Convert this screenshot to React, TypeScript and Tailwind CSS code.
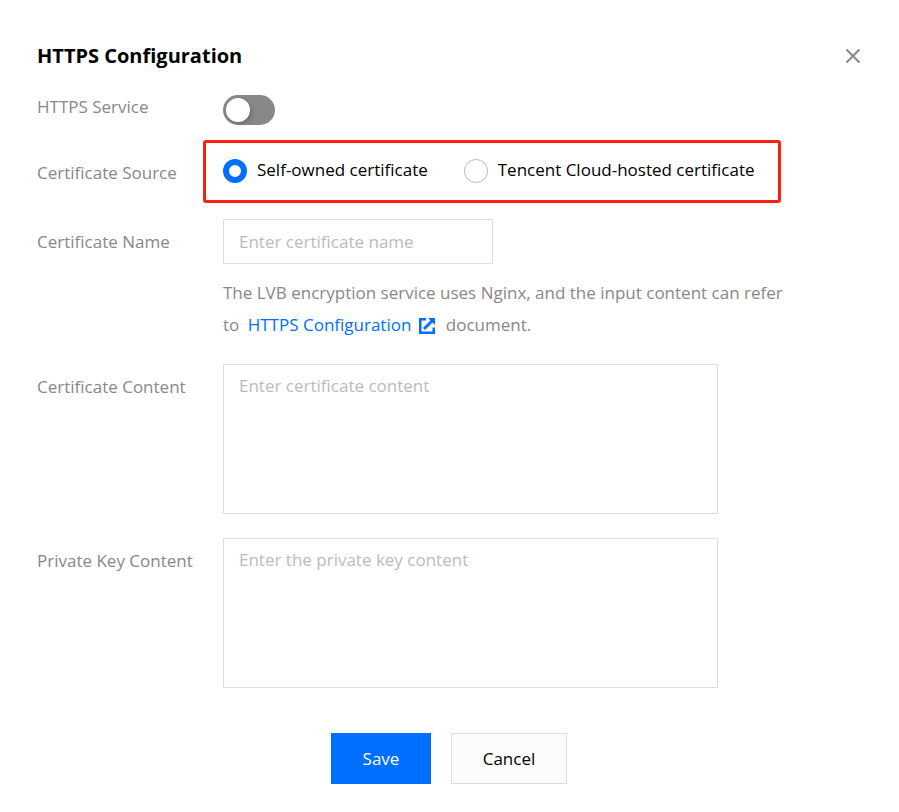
import { useState, type ReactNode } from "react";

const labelClass = "w-[186px] shrink-0 leading-6 text-[#888888]";
const fieldClass =
  "block border border-[#dddddd] bg-white px-[15px] text-black outline-none placeholder:text-[#bbbbbb] placeholder:opacity-100 focus:border-[#006eff]";

function CertificateOption({
  value,
  selected,
  onSelect,
  children,
}: {
  value: string;
  selected: string;
  onSelect: (value: string) => void;
  children: ReactNode;
}) {
  return (
    <label className="flex cursor-pointer items-center gap-[10px] whitespace-nowrap">
      <input
        type="radio"
        name="certificate-source"
        value={value}
        checked={selected === value}
        onChange={() => onSelect(value)}
        className="mt-[2px] size-6 shrink-0 appearance-none rounded-full border border-[#bbbbbb] bg-white checked:border-[6px] checked:border-[#006eff]"
      />
      <span className="leading-6">{children}</span>
    </label>
  );
}

function ExternalLinkIcon() {
  return (
    <svg viewBox="0 0 16 16" className="ml-2 inline size-4 align-[-3px]" fill="none" aria-hidden="true">
      <path d="M7 1.25H1.25v13.5h13.5V9.5" stroke="currentColor" strokeWidth="2.5" />
      <path d="M5 11 13 3" stroke="currentColor" strokeWidth="2.8" />
      <path d="M9 0h7v7z" fill="currentColor" />
    </svg>
  );
}

export default function App() {
  const [enabled, setEnabled] = useState(false);
  const [source, setSource] = useState("self");

  return (
    <main className="min-h-screen bg-white pt-10 pr-[38px] pb-7 pl-[37px] font-['Open_Sans','Noto_Sans',sans-serif] text-[17px] text-black">
      <header className="flex h-8 items-center justify-between">
        <h1 className="text-[20px] font-bold">HTTPS Configuration</h1>
        <button type="button" aria-label="Close" className="flex size-4 items-center justify-center text-[#888888]">
          <svg viewBox="0 0 16 16" className="size-4" fill="none" aria-hidden="true">
            <path d="M1.5 1.5l13 13M14.5 1.5l-13 13" stroke="currentColor" strokeWidth="2" />
          </svg>
        </button>
      </header>

      <form onSubmit={(event) => event.preventDefault()}>
        <div className="mt-[23px] flex">
          <label htmlFor="https-service" className={labelClass}>
            HTTPS Service
          </label>
          <input
            id="https-service"
            type="checkbox"
            role="switch"
            checked={enabled}
            onChange={(event) => setEnabled(event.target.checked)}
            className="flex h-[30px] w-[52px] cursor-pointer appearance-none items-center rounded-full bg-[#888888] px-[3px] before:size-6 before:rounded-full before:bg-white before:shadow-[2px_2px_4px_rgba(0,0,0,0.2)] before:content-[''] checked:justify-end checked:bg-[#006eff]"
          />
        </div>

        <div role="radiogroup" aria-labelledby="source-label" className="mt-[15px] flex">
          <span id="source-label" className={`${labelClass} pt-[21px]`}>
            Certificate Source
          </span>
          <div className="-ml-5 flex h-[63px] w-[578px] items-center gap-9 rounded-[3px] border-[3px] border-[#ff2010] pb-[3px] pl-[17px]">
            <CertificateOption value="self" selected={source} onSelect={setSource}>
              Self-owned certificate
            </CertificateOption>
            <CertificateOption value="hosted" selected={source} onSelect={setSource}>
              Tencent Cloud-hosted certificate
            </CertificateOption>
          </div>
        </div>

        <div className="mt-4 flex">
          <label htmlFor="certificate-name" className={`${labelClass} pt-[11px]`}>
            Certificate Name
          </label>
          <div className="flex-1">
            <input
              id="certificate-name"
              type="text"
              placeholder="Enter certificate name"
              className={`${fieldClass} h-[45px] w-[270px]`}
            />
            <p className="mt-[13px] max-w-[580px] leading-8 text-[#888888]">
              The LVB encryption service uses Nginx, and the input content can refer to{" "}
              <a href="#https-configuration" className="mr-[6px] ml-1 text-[#006eff]">
                HTTPS Configuration
                <ExternalLinkIcon />
              </a>{" "}
              document.
            </p>
          </div>
        </div>

        <div className="mt-[23px] flex">
          <label htmlFor="certificate-content" className={`${labelClass} pt-[11px]`}>
            Certificate Content
          </label>
          <textarea
            id="certificate-content"
            placeholder="Enter certificate content"
            className={`${fieldClass} h-[150px] w-[495px] resize-none py-[9px] leading-6`}
          />
        </div>

        <div className="mt-6 flex">
          <label htmlFor="private-key" className={`${labelClass} pt-[11px]`}>
            Private Key Content
          </label>
          <textarea
            id="private-key"
            placeholder="Enter the private key content"
            className={`${fieldClass} h-[150px] w-[495px] resize-none py-[9px] leading-6`}
          />
        </div>

        <div className="mt-[45px] flex justify-center gap-5">
          <button type="submit" className="h-[51px] w-[100px] bg-[#006eff] text-white">
            Save
          </button>
          <button type="button" className="h-[51px] w-[116px] border border-[#dddddd] bg-[#fcfcfc]">
            Cancel
          </button>
        </div>
      </form>
    </main>
  );
}
